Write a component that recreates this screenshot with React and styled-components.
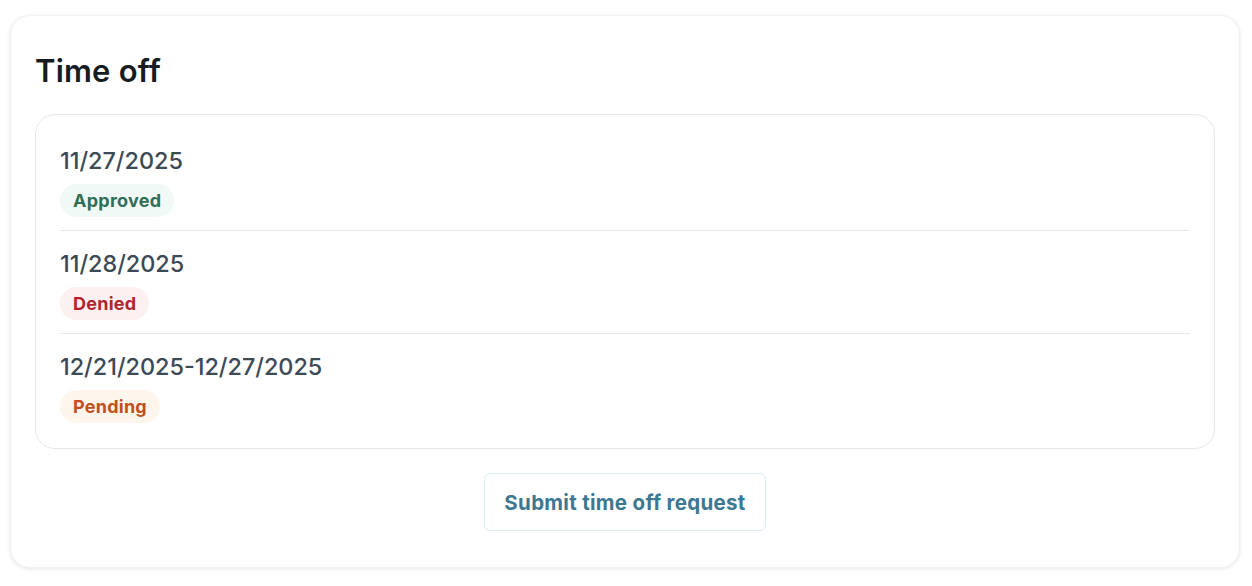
import React from "react";
import styled, { createGlobalStyle } from "styled-components";

const Global = createGlobalStyle`
  html, body { margin: 0; padding: 0; background: #ffffff; }
  body {
    font-family: Inter, "Noto Sans", "Liberation Sans", sans-serif;
    -webkit-font-smoothing: antialiased;
  }
`;

const Page = styled.div`
  padding: 15px 12px 18px 10px;
`;

const Card = styled.section`
  background: #ffffff;
  border-radius: 20px;
  border: 1px solid #f1f2f3;
  box-shadow: 0 1px 4px rgba(0, 0, 0, 0.1);
  padding: 38px 24px 36px 24px;
  display: flex;
  flex-direction: column;
`;

const Title = styled.h2`
  margin: 0 0 26px 0;
  font-size: 31px;
  line-height: 34px;
  font-weight: 600;
  color: #171c21;
  letter-spacing: 0.2px;
`;

const List = styled.ul`
  list-style: none;
  margin: 0;
  padding: 13px 24px 12px;
  border: 1px solid #e3e8ec;
  border-radius: 20px;
`;

const Row = styled.li`
  display: flex;
  flex-direction: column;
  align-items: flex-start;
  gap: 8px;
  padding: 17px 0 13px;
  border-bottom: 1px solid #e6e9ec;
  &:last-child { border-bottom: none; }
`;

const DateText = styled.div`
  font-size: 23.4px;
  line-height: 31px;
  font-weight: 500;
  color: #3c4a55;
`;

const tones = {
  approved: { fg: "#2e6f59", bg: "#f1f9f7" },
  denied: { fg: "#b2252e", bg: "#fcf0f0" },
  pending: { fg: "#c0501e", bg: "#fef5ec" },
};

const Badge = styled.span`
  display: inline-flex;
  align-items: center;
  height: 33px;
  padding: 0 13px;
  border-radius: 17px;
  font-size: 18px;
  font-weight: 700;
  letter-spacing: 0.25px;
  color: ${(p) => tones[p.$tone].fg};
  background: ${(p) => tones[p.$tone].bg};
`;

const Footer = styled.div`
  display: flex;
  justify-content: center;
  margin-top: 24px;
`;

const Button = styled.button`
  height: 58px;
  padding: 0 19px;
  background: #ffffff;
  border: 1px solid #dcecf1;
  border-radius: 6px;
  font-family: inherit;
  font-size: 20.5px;
  font-weight: 700;
  letter-spacing: 0.3px;
  color: #3d7893;
  cursor: pointer;
`;

const items = [
  { date: "11/27/2025", status: "Approved", tone: "approved" },
  { date: "11/28/2025", status: "Denied", tone: "denied" },
  { date: "12/21/2025-12/27/2025", status: "Pending", tone: "pending" },
];

export default function App() {
  return (
    <>
      <Global />
      <Page>
        <Card>
          <Title>Time off</Title>
          <List>
            {items.map((it) => (
              <Row key={it.date}>
                <DateText>{it.date}</DateText>
                <Badge $tone={it.tone}>{it.status}</Badge>
              </Row>
            ))}
          </List>
          <Footer>
            <Button>Submit time off request</Button>
          </Footer>
        </Card>
      </Page>
    </>
  );
}
